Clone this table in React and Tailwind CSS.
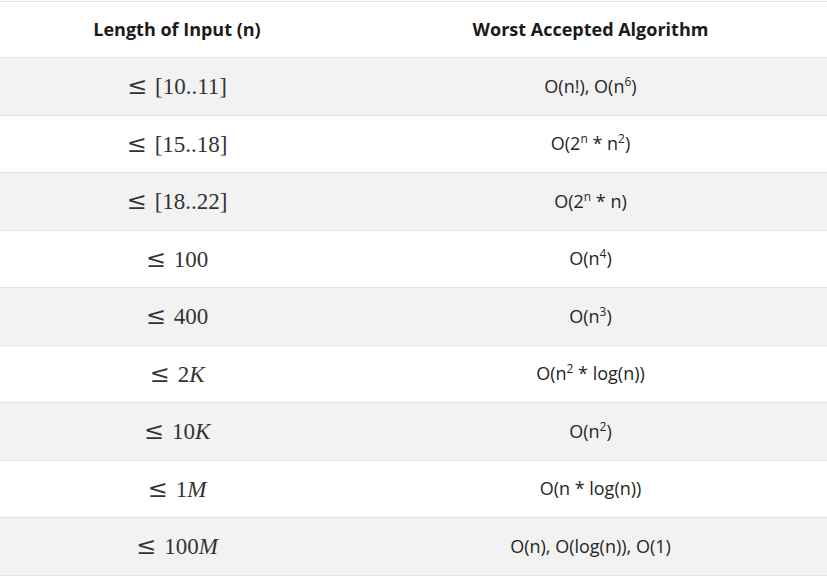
const rows = [
  { n: <>[10..11]</>, algo: <>O(n!), O(n<sup>6</sup>)</> },
  { n: <>[15..18]</>, algo: <>O(2<sup>n</sup> * n<sup>2</sup>)</> },
  { n: <>[18..22]</>, algo: <>O(2<sup>n</sup> * n)</> },
  { n: <>100</>, algo: <>O(n<sup>4</sup>)</> },
  { n: <>400</>, algo: <>O(n<sup>3</sup>)</> },
  { n: <>2<i>K</i></>, algo: <>O(n<sup>2</sup> * log(n))</> },
  { n: <>10<i>K</i></>, algo: <>O(n<sup>2</sup>)</> },
  { n: <>1<i>M</i></>, algo: <>O(n * log(n))</> },
  { n: <>100<i>M</i></>, algo: <>O(n), O(log(n)), O(1)</> },
]

function Row({ n, algo, shaded }) {
  return (
    <div
      className={`grid h-[57.5px] grid-cols-[354px_1fr] items-center border-b border-[#e2e2e8] ${
        shaded ? 'bg-[#f2f2f2]' : 'bg-white'
      }`}
    >
      <div className="text-center font-['Liberation_Serif',serif] text-[23px] text-[#333]">
        <span className="mr-[8px] font-['DejaVu_Serif',serif] text-[24px] font-light">≤</span>
        {n}
      </div>
      <div className="text-center font-['Open_Sans',sans-serif] text-[18px] text-[#262626] [&_sup]:-top-[0.6em] [&_sup]:text-[12px]">
        {algo}
      </div>
    </div>
  )
}

export default function App() {
  return (
    <div className="h-[576px] w-[827px] overflow-hidden bg-white pt-px">
      <div className="border-t border-[#e0e0e0]">
        <div className="grid h-[56px] grid-cols-[354px_1fr] items-center border-b border-[#e2e2e8] font-['Open_Sans',sans-serif] text-[18px] font-bold text-[#1a1a1a]">
          <div className="text-center">Length of Input (n)</div>
          <div className="text-center">Worst Accepted Algorithm</div>
        </div>
        {rows.map((r, i) => (
          <Row key={i} n={r.n} algo={r.algo} shaded={i % 2 === 0} />
        ))}
      </div>
    </div>
  )
}
